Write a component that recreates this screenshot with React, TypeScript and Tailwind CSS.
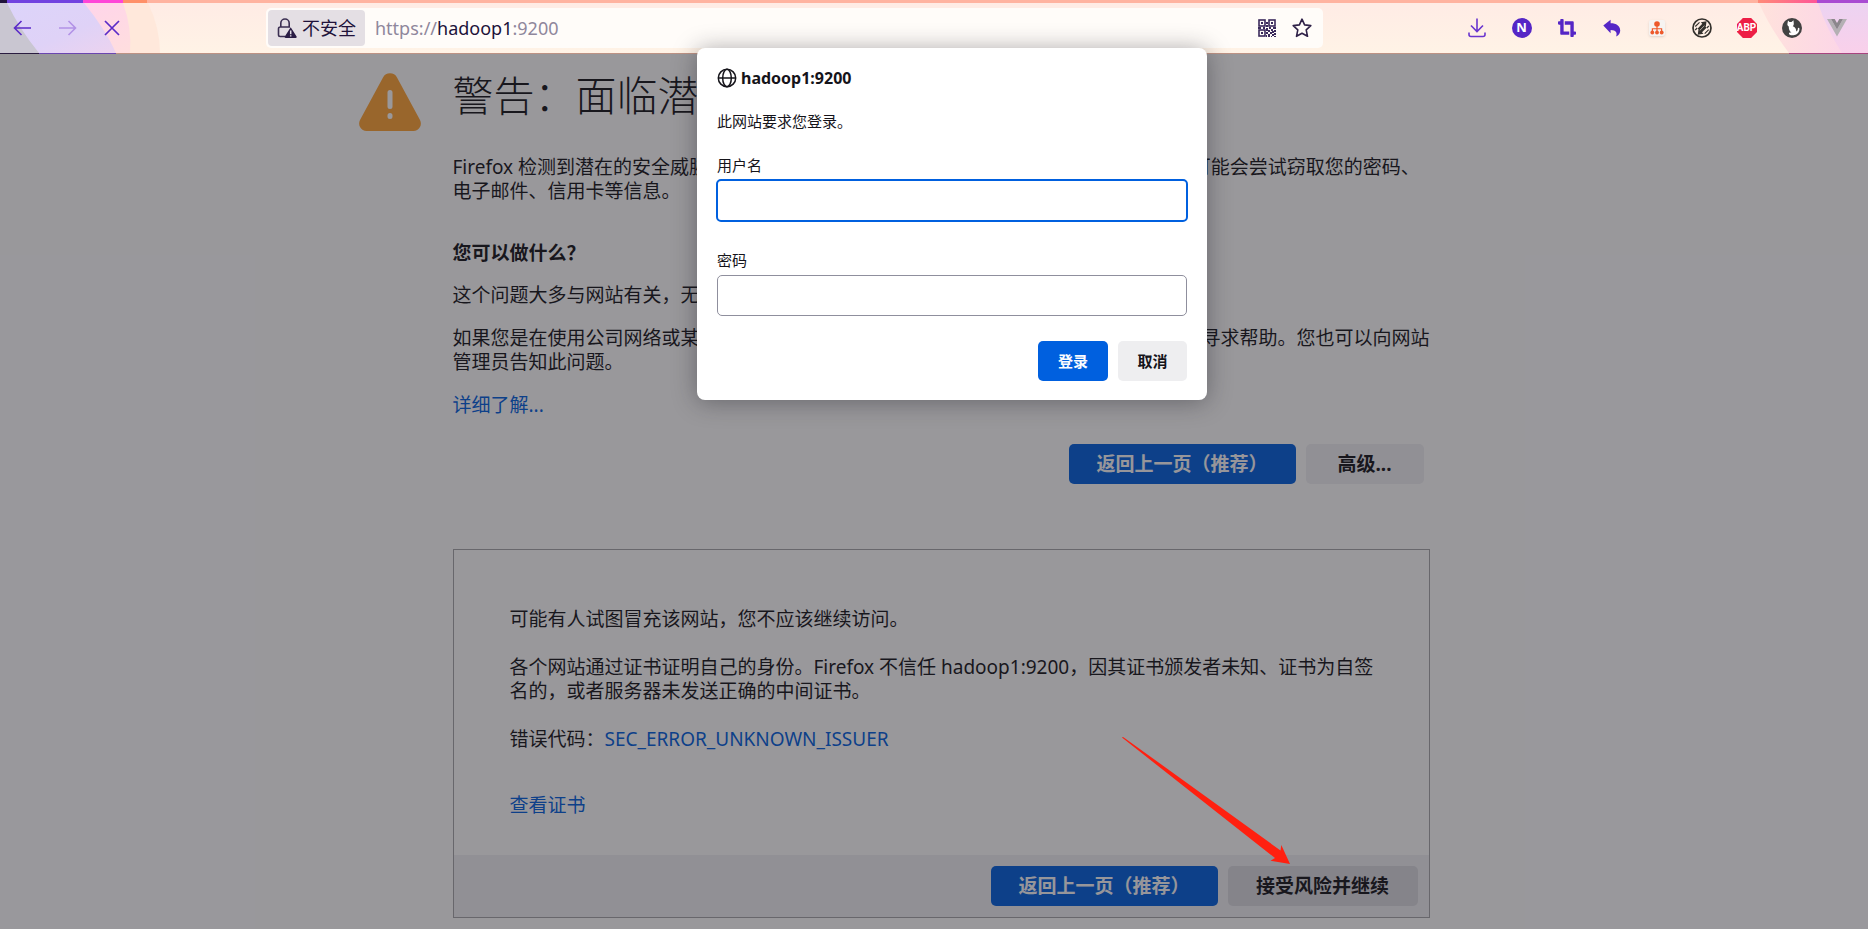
import cn from 'clsx'
import { FaCropAlt } from 'react-icons/fa'

const iconButton = cn('flex h-10 w-[45px] shrink-0 items-center justify-center')
const pageButton = cn('h-10 rounded-[5px] text-[19px] leading-6 font-bold whitespace-nowrap')
const link = cn('text-[#0060df]')

function ThemeBackground() {
  return (
    <>
      <svg className="absolute top-0 left-0 h-[54px] w-[180px]" viewBox="0 0 180 54" aria-hidden="true">
        <defs>
          <linearGradient id="lavender" x1="0" y1="0" x2="1" y2="1">
            <stop offset="0" stopColor="#dcd4fa" />
            <stop offset="0.6" stopColor="#dfd2f7" />
            <stop offset="1" stopColor="#ecd3ef" />
          </linearGradient>
          <linearGradient id="pink" x1="0" y1="0" x2="1" y2="1">
            <stop offset="0" stopColor="#ffd0f0" />
            <stop offset="1" stopColor="#ffdede" />
          </linearGradient>
        </defs>
        <path d="M0 0H147V3H0z" fill="#ff9068" />
        <path d="M0 0H123V3H0z" fill="#ff45d8" />
        <path d="M0 0H83V3H0z" fill="#7142e0" />
        <path d="M0 0H7V3H0z" fill="#20123a" />
        <path d="M0 3H148Q160 28 160 53H0z" fill="#ffe8db" />
        <path d="M0 3H123Q132 28 130 53H0z" fill="url(#pink)" />
        <path d="M0 3H84Q106 30 116 53H0z" fill="url(#lavender)" />
        <path d="M0 3H7Q20 30 39 53H0z" fill="#c9c6d1" />
        <path d="M0 53H39V54H0z" fill="#2a1c40" />
        <path d="M39 53H116V54H39z" fill="#6b46b0" />
      </svg>
      <svg className="absolute top-0 right-0 h-[54px] w-[118px]" viewBox="0 0 118 54" aria-hidden="true">
        <defs>
          <linearGradient id="strip">
            <stop offset="0" stopColor="#ff8a78" />
            <stop offset="0.6" stopColor="#ff4f9a" />
          </linearGradient>
          <linearGradient id="glow">
            <stop offset="0" stopColor="#ffe2dc" />
            <stop offset="1" stopColor="#fbd2ea" />
          </linearGradient>
          <linearGradient id="violet" x1="0" y1="1" x2="0" y2="0">
            <stop offset="0" stopColor="#f9d0ea" />
            <stop offset="1" stopColor="#ecd3f2" />
          </linearGradient>
        </defs>
        <path d="M8 0H118V3H8z" fill="url(#strip)" />
        <path d="M67 0H118V3H67z" fill="#a94bd2" />
        <path d="M9 3H118V53H39Q20 28 9 3z" fill="url(#glow)" />
        <path d="M68 3H118V53H92Q76 28 68 3z" fill="url(#violet)" />
        <path d="M39 53H118V54H39z" fill="#a8447f" />
      </svg>
    </>
  )
}

function QrIcon() {
  return (
    <svg className="size-[18px]" viewBox="0 0 18 18" fill="none" stroke="#3b2a5c" aria-hidden="true">
      <rect x="1" y="1" width="6" height="6" strokeWidth="1.6" />
      <rect x="11" y="1" width="6" height="6" strokeWidth="1.6" />
      <rect x="1" y="11" width="6" height="6" strokeWidth="1.6" />
      <path
        fill="#3b2a5c"
        stroke="none"
        d="M3 3h2v2H3zM13 3h2v2h-2zM3 13h2v2H3zM8 3h2v2H8zM8 6h2v2H8zM0 8h3v2H0zM5 8h2v2H5zM8 9h2v3H8zM11 8h2v2h-2zM15 8h3v2h-3zM10 11h2v2h-2zM13 10h2v2h-2zM16 11h2v2h-2zM8 13h2v2H8zM12 13h2v2h-2zM14 12h2v2h-2zM10 15h2v3h-2zM14 15h2v2h-2zM16 14h2v2h-2zM8 16h1v2H8zM16 17h2v1h-2zM13 17h1v1h-1z"
      />
    </svg>
  )
}

function InsecureLockIcon() {
  return (
    <svg className="size-5" viewBox="0 0 20 20" aria-hidden="true">
      <path
        d="M8 18.5H3.2a1.7 1.7 0 0 1-1.7-1.7v-6.1A1.7 1.7 0 0 1 3.2 9H13M3.8 9V5.200a4.200 4.200 0 0 1 8.400 0V9"
        fill="none"
        stroke="#3b2f52"
        strokeWidth="1.6"
      />
      <path d="m13.700 9.300 5.900 9.100a1 1 0 0 1-.9 1.500h-10a1 1 0 0 1-.9-1.500z" fill="#2b1d45" />
      <path d="M13.700 12.500v3.700M13.700 17.300v1.300" stroke="#e4dee4" strokeWidth="1.5" />
    </svg>
  )
}

function GlobeIcon() {
  return (
    <svg className="size-5" viewBox="0 0 20 20" fill="none" stroke="#15141a" strokeWidth="1.5" aria-hidden="true">
      <circle cx="10" cy="10" r="8.700" />
      <ellipse cx="10" cy="10" rx="4.300" ry="8.700" />
      <path d="M1.500 10h17" />
    </svg>
  )
}

function Toolbar() {
  return (
    <header className="relative bg-linear-to-b from-[#ffebe5] to-[#fff3e6]">
      <div className="h-[3px] bg-[#ffb3a0]" />
      <ThemeBackground />
      <div className="relative flex h-[50px] items-center pr-[9px]">
        <button className={iconButton} aria-label="后退">
          <svg className="size-5" viewBox="0 0 20 20" fill="none" stroke="#5b2bc8" strokeWidth="1.6" aria-hidden="true">
            <path d="M18 10H1.500M8.500 3l-7 7 7 7" />
          </svg>
        </button>
        <button className={iconButton} aria-label="前进">
          <svg className="size-5" viewBox="0 0 20 20" fill="none" stroke="#b292e6" strokeWidth="1.6" aria-hidden="true">
            <path d="M1 10h16.500M10.500 3l7 7-7 7" />
          </svg>
        </button>
        <button className={iconButton} aria-label="停止">
          <svg className="size-5" viewBox="0 0 20 20" fill="none" stroke="#5b2bc8" strokeWidth="1.7" aria-hidden="true">
            <path d="m2 3 14 14M16 3 2 17" />
          </svg>
        </button>
        <div className="mx-[131px] flex h-10 min-w-0 flex-1 items-center rounded-[5px] bg-[#fffcf9] pr-1 pl-0.5">
          <button className="flex h-9 shrink-0 items-center gap-[5px] rounded-[4px] bg-[#e4dfe4] px-[9px] text-[18px] text-[#20123a]">
            <InsecureLockIcon />
            不安全
          </button>
          <div className="min-w-0 flex-1 pl-2.5 text-[18px] text-[#8f879c]">
            https://<span className="text-[#20123a]">hadoop1</span>:9200
          </div>
          <button className="flex h-9 w-[35px] items-center justify-center" aria-label="二维码">
            <QrIcon />
          </button>
          <button className="flex h-9 w-[35px] items-center justify-center" aria-label="收藏">
            <svg
              className="size-5"
              viewBox="0 0 20 20"
              fill="none"
              stroke="#2f2148"
              strokeWidth="1.6"
              strokeLinejoin="round"
              aria-hidden="true"
            >
              <path d="m10 1.200 2.600 5.700 6.200.7-4.600 4.200 1.300 6.500L10 15.200l-5.500 3.100 1.300-6.500L1.200 7.600l6.200-.7z" />
            </svg>
          </button>
        </div>
        <button className={iconButton} aria-label="下载">
          <svg className="size-5" viewBox="0 0 20 20" fill="none" stroke="#6a35cf" strokeWidth="1.6" aria-hidden="true">
            <path d="M10 .5v13M4 7.500l6 6 6-6M2 14.500v2a2 2 0 0 0 2 2h12a2 2 0 0 0 2-2v-2" />
          </svg>
        </button>
        <button className={iconButton} aria-label="笔记">
          <span className="flex size-5 items-center justify-center rounded-full bg-[#5526c6] text-[13px] font-bold text-white">
            N
          </span>
        </button>
        <button className={iconButton} aria-label="截图">
          <FaCropAlt className="size-[18px] text-[#5526c6]" />
        </button>
        <button className={iconButton} aria-label="撤销">
          <svg className="size-[18px]" viewBox="0 0 18 18" fill="#5526c6" aria-hidden="true">
            <path d="M.3 6.500 7.600.8v3.500c5.800 0 9.600 2.600 9.600 7.200 0 2.600-1.200 4.800-4.200 6.100 1.500-3.600.4-6.700-5.400-6.700v3.300z" />
          </svg>
        </button>
        <button className={iconButton} aria-label="站点地图">
          <span className="flex size-4 items-center justify-center rounded-[2px] bg-[#f6f3f1] shadow-sm">
            <svg className="size-[14px]" viewBox="0 0 14 14" fill="#ee5a2c" aria-hidden="true">
              <circle cx="7" cy="3" r="2.800" />
              <path d="M6.400 5h1.200v2.200h4.600v3h-1.200v-1.900H7.600v2H6.400v-2H3v1.900H1.800v-3h4.600z" />
              <circle cx="2.300" cy="11.500" r="1.900" />
              <circle cx="7" cy="11.500" r="1.900" />
              <circle cx="11.700" cy="11.500" r="1.900" />
            </svg>
          </span>
        </button>
        <button className={iconButton} aria-label="代理">
          <svg className="size-5" viewBox="0 0 20 20" fill="#33302c" stroke="#33302c" aria-hidden="true">
            <circle cx="10" cy="10" r="9" fill="none" strokeWidth="1.700" />
            <g stroke="none">
              <path d="m14.500 3.300-5.700 1 1.500 1.400-4.600 4.700 1.900 1.900 4.700-4.800 1.500 1.500z" />
              <path d="m5.800 16.700 5.700-1-1.500-1.400 4.500-4.600-1.900-1.900-4.600 4.700-1.500-1.500z" />
            </g>
            <path d="M3.300 8.500 7.500 4.300M3.200 12l2-2M12.700 15.700l4-4M14.800 10l2-2" fill="none" strokeWidth="1.100" />
          </svg>
        </button>
        <button className={iconButton} aria-label="Adblock Plus">
          <span className="relative flex size-5 items-center justify-center">
            <svg className="absolute inset-0 size-5" viewBox="0 0 20 20" fill="#ed1e45" aria-hidden="true">
              <path d="M5.900 0h8.200L20 5.900v8.200L14.100 20H5.900L0 14.100V5.900z" />
            </svg>
            <span className="relative font-['Roboto'] text-[10px] leading-none font-bold text-white">ABP</span>
          </span>
        </button>
        <button className={iconButton} aria-label="脚本">
          <svg className="size-5" viewBox="0 0 20 20" aria-hidden="true">
            <circle cx="10" cy="10" r="10" fill="#424242" />
            <path
              d="M6 2.500 7.500 4h2L11.500 2.300 11.800 6c0 1-.4 1.700-1 2.200 2.300.9 3.600 2.900 3.500 5.300 1.100-.5 1.600-1.500 1.500-2.900 0-1 1.500-1.100 1.600 0 .2 3.200-1.600 5.800-5 6.500-2.700.6-5.200-.2-5.400-1.400-.1-.8.700-1.100 1.500-1.100h1c-2-1.600-2.900-3.700-2.700-6.200C5.600 7.800 5.300 7 5.400 6z"
              fill="#fff"
            />
          </svg>
        </button>
        <button className={iconButton} aria-label="Vue">
          <svg className="h-[18px] w-5" viewBox="0 0 20 18" aria-hidden="true">
            <path d="M0 0h4l6 10.500L16 0h4L10 17.500z" fill="#b4b0b4" />
            <path d="M4 0h3.700L10 4l2.300-4H16l-6 10.500z" fill="#8b878c" />
          </svg>
        </button>
      </div>
      <div className="h-px bg-[#bd9284]" />
    </header>
  )
}

function LoginDialog() {
  return (
    <div className="pointer-events-none absolute inset-x-0 top-12 z-30 flex justify-center pl-9">
      <form
        role="dialog"
        aria-label="登录"
        className="pointer-events-auto w-[510px] rounded-lg bg-white px-5 pt-[18px] pb-[19px] text-[15px] leading-6 text-[#15141a] shadow-[0_2px_24px_rgba(28,27,34,0.4)]"
      >
        <div className="flex items-center gap-1 text-[16px] font-bold">
          <GlobeIcon />
          hadoop1:9200
        </div>
        <p className="mt-[19px]">此网站要求您登录。</p>
        <label htmlFor="username" className="mt-5 block">
          用户名
        </label>
        <input
          id="username"
          type="text"
          className="-mx-px mt-0.5 block h-[43px] w-[472px] rounded-[5px] border-2 border-[#0060df] px-2 outline-none"
        />
        <label htmlFor="password" className="mt-[26px] block">
          密码
        </label>
        <input
          id="password"
          type="password"
          className="mt-[3px] block h-[41px] w-full rounded-[5px] border border-[#8f8f9d] px-2 outline-none"
        />
        <div className="mt-[25px] flex justify-end gap-2.5 font-bold">
          <button type="button" className="h-10 w-[70px] rounded-[5px] bg-[#0060df] text-[#fbfbfe]">
            登录
          </button>
          <button type="button" className="h-10 w-[69px] rounded-[5px] bg-[#eeeef0]">
            取消
          </button>
        </div>
      </form>
    </div>
  )
}

function AdvancedPanel() {
  return (
    <section className="relative mt-[65px] border border-[#a6a6aa]">
      <div className="px-14 pt-[57px] pb-[38px] whitespace-nowrap">
        <p>可能有人试图冒充该网站，您不应该继续访问。</p>
        <p className="mt-6">
          各个网站通过证书证明自己的身份。Firefox 不信任 hadoop1:9200，因其证书颁发者未知、证书为自签
          <br />
          名的，或者服务器未发送正确的中间证书。
        </p>
        <p className="mt-6">
          错误代码：
          <a href="#error-code" className={link}>
            SEC_ERROR_UNKNOWN_ISSUER
          </a>
        </p>
        <p className="mt-[42px]">
          <a href="#certificate" className={link}>
            查看证书
          </a>
        </p>
      </div>
      <div className="flex justify-end gap-2.5 bg-[#f0f0f4] p-[11px]">
        <button className={cn(pageButton, 'w-[227px] bg-[#0060df] text-[#fbfbfe]')}>返回上一页（推荐）</button>
        <button className={cn(pageButton, 'w-[190px] bg-[#dadae0]')}>接受风险并继续</button>
      </div>
      <svg
        className="absolute top-[187px] right-[138px] z-20 h-[128px] w-[169px]"
        viewBox="0 0 169 128"
        fill="#ff2010"
        aria-hidden="true"
      >
        <path d="M0 .6Q.6-.4 1.800.4L158.500 113.500 159.300 108 168 127 148.500 123.700 153 121z" />
      </svg>
    </section>
  )
}

export default function App() {
  return (
    <div className="relative flex min-h-screen flex-col overflow-x-hidden bg-white font-['Noto_Sans','Noto_Sans_CJK_SC',sans-serif]">
      <Toolbar />
      <main className="relative flex-1 pt-[19px] pr-20 pb-2.5 text-[19px] leading-6 text-[#15141a]">
        <div className="mx-auto flex max-w-[1071px]">
          <div className="w-[94px] shrink-0">
            <svg className="h-[58px] w-[62px]" viewBox="0 0 62 58" aria-hidden="true">
              <path
                d="M24 4.500a8 8 0 0 1 14 0l23 42.500a7.500 7.500 0 0 1-6.500 11h-47A7.500 7.500 0 0 1 1 47z"
                fill="#ffa436"
              />
              <path d="M31 19.500v14M31 42.500v1" stroke="#fff" strokeWidth="5" strokeLinecap="round" />
            </svg>
          </div>
          <div className="min-w-0 flex-1">
            <h1 className="text-[41px] leading-11 font-light whitespace-nowrap">警告：面临潜在的安全风险</h1>
            <p className="mt-[38px] whitespace-nowrap">
              Firefox 检测到潜在的安全威胁，因此没有继续访问 hadoop1。若您访问此网站，攻击者可能会尝试窃取您的密码、
              <br />
              电子邮件、信用卡等信息。
            </p>
            <h2 className="mt-[38px] font-bold">您可以做什么？</h2>
            <p className="mt-[18px]">这个问题大多与网站有关，无法由您自行解决。</p>
            <p className="mt-[19px] whitespace-nowrap">
              如果您是在使用公司网络或某种反病毒软件保护的电脑上网，可以联系公司的 IT 支持团队寻求帮助。您也可以向网站
              <br />
              管理员告知此问题。
            </p>
            <p className="mt-[19px]">
              <a href="#learn-more" className={link}>
                详细了解...
              </a>
            </p>
            <div className="mt-[27px] flex justify-end gap-2.5 pr-1.5">
              <button className={cn(pageButton, 'w-[227px] bg-[#0060df] text-[#fbfbfe]')}>返回上一页（推荐）</button>
              <button className={cn(pageButton, 'w-[118px] bg-[#f0f0f4]')}>高级...</button>
            </div>
            <AdvancedPanel />
          </div>
        </div>
        <div className="absolute inset-0 z-10 bg-[#1c1b22]/45" />
      </main>
      <LoginDialog />
    </div>
  )
}
